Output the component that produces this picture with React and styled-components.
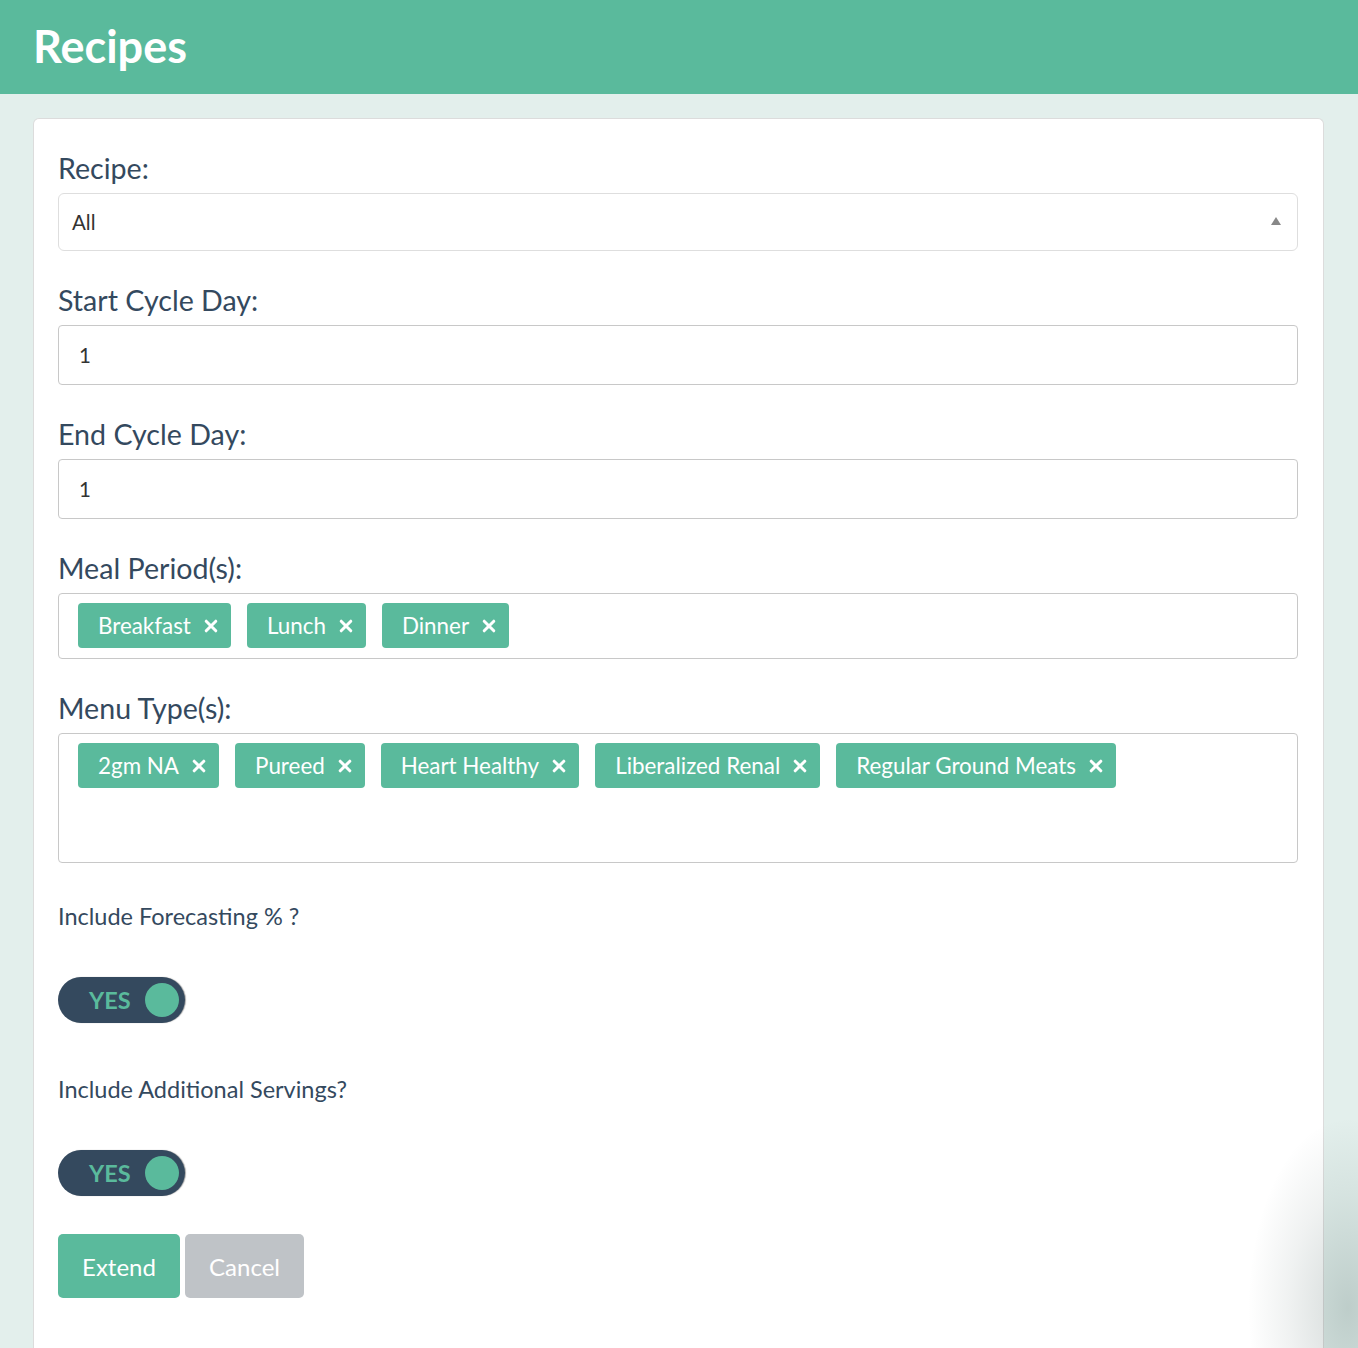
import React from "react";
import styled, { createGlobalStyle } from "styled-components";

const GREEN = "#5aba9c";
const DARK = "#34495e";

const Global = createGlobalStyle`
  html, body { margin: 0; padding: 0; }
  body {
    background: #e3efec;
    font-family: Lato, "Open Sans", "Liberation Sans", sans-serif;
    color: ${DARK};
  }
  * { box-sizing: border-box; }
`;

const Page = styled.div`
  min-height: 1348px;
  display: flex;
  flex-direction: column;
  position: relative;
  overflow: hidden;
`;

const Haze = styled.div`
  position: absolute;
  right: -90px;
  bottom: -150px;
  width: 200px;
  height: 380px;
  border-radius: 50%;
  background: radial-gradient(closest-side, rgba(40, 70, 65, 0.2), rgba(40, 70, 65, 0.07) 60%, rgba(40, 70, 65, 0) 100%);
  pointer-events: none;
`;

const Header = styled.header`
  height: 94px;
  background: ${GREEN};
  display: flex;
  align-items: center;
  padding-left: 33px;
`;

const Title = styled.h1`
  margin: 0;
  font-size: 45px;
  font-weight: 700;
  color: #fff;
  line-height: 1;
  padding-bottom: 2px;
`;

const Card = styled.main`
  margin: 24px 34px 0 33px;
  background: #fff;
  border: 1px solid #dcdcdc;
  border-bottom: none;
  border-radius: 6px 6px 0 0;
  padding: 29px 25px 50px 24px;
  flex: 1;
`;

const Group = styled.div`
  display: flex;
  flex-direction: column;
  margin-bottom: ${(p) => (p.$last ? 0 : 29)}px;
`;

const Label = styled.label`
  font-size: 28.6px;
  line-height: 40px;
  height: 40px;
  color: ${DARK};
  margin-bottom: 5px;
`;

const SelectBox = styled.div`
  height: 58px;
  border: 1px solid #dedede;
  border-radius: 6px;
  display: flex;
  align-items: center;
  justify-content: space-between;
  padding: 0 16px 0 13px;
  font-size: 20.5px;
  color: #333;
`;

const Caret = styled.span`
  width: 0;
  height: 0;
  border-left: 5px solid transparent;
  border-right: 5px solid transparent;
  border-bottom: 8px solid #888;
  margin-top: -3px;
`;

const Input = styled.div`
  height: 60px;
  border: 1px solid #c8c8c8;
  border-radius: 4px;
  display: flex;
  align-items: center;
  padding-left: 20px;
  font-size: 20.5px;
  color: #333;
`;

const TagBox = styled.div`
  min-height: ${(p) => p.$min}px;
  border: 1px solid #c8c8c8;
  border-radius: 4px;
  padding: 9px 19px;
  display: flex;
  flex-wrap: wrap;
  align-content: flex-start;
  gap: 10px 16px;
`;

const Tag = styled.span`
  height: 45px;
  background: ${GREEN};
  color: #fff;
  border-radius: 4px;
  display: inline-flex;
  align-items: center;
  padding: 0 13px 0 20px;
  font-size: 22.4px;
  gap: 13px;
`;

const Remove = styled.svg`
  width: 14px;
  height: 14px;
`;

const Question = styled.p`
  margin: ${(p) => (p.$second ? 51 : 38)}px 0 0;
  font-size: 23.5px;
  line-height: 30px;
  color: ${DARK};
`;

const Toggle = styled.div`
  margin-top: 46px;
  width: 127px;
  height: 46px;
  border-radius: 23px;
  background: ${DARK};
  display: flex;
  align-items: center;
  padding: 0 6px 0 31px;
  justify-content: space-between;
  box-shadow: 1px 0 1px rgba(0, 0, 0, 0.35);
`;

const ToggleText = styled.span`
  color: ${GREEN};
  font-weight: 700;
  font-size: 23.5px;
`;

const Knob = styled.span`
  width: 34px;
  height: 34px;
  border-radius: 50%;
  background: ${GREEN};
`;

const Actions = styled.div`
  margin-top: 38px;
  display: flex;
  gap: 5px;
`;

const Button = styled.button`
  height: 64px;
  width: ${(p) => p.$w}px;
  border: none;
  border-radius: 5px;
  background: ${(p) => (p.$muted ? "#bfc3c7" : GREEN)};
  color: #fff;
  font-family: inherit;
  font-size: 24px;
  cursor: pointer;
`;

const X = () => (
  <Remove viewBox="0 0 14 14">
    <path d="M2.2 2.2 L11.8 11.8 M11.8 2.2 L2.2 11.8" stroke="#fff" strokeWidth="3" strokeLinecap="round" />
  </Remove>
);

const meals = ["Breakfast", "Lunch", "Dinner"];
const menus = ["2gm NA", "Pureed", "Heart Healthy", "Liberalized Renal", "Regular Ground Meats"];

export default function App() {
  return (
    <Page>
      <Global />
      <Header>
        <Title>Recipes</Title>
      </Header>
      <Card>
        <Group>
          <Label>Recipe:</Label>
          <SelectBox>
            <span>All</span>
            <Caret />
          </SelectBox>
        </Group>
        <Group>
          <Label>Start Cycle Day:</Label>
          <Input>1</Input>
        </Group>
        <Group>
          <Label>End Cycle Day:</Label>
          <Input>1</Input>
        </Group>
        <Group>
          <Label>Meal Period(s):</Label>
          <TagBox $min={66}>
            {meals.map((m) => (
              <Tag key={m}>
                {m}
                <X />
              </Tag>
            ))}
          </TagBox>
        </Group>
        <Group $last>
          <Label>Menu Type(s):</Label>
          <TagBox $min={130}>
            {menus.map((m) => (
              <Tag key={m}>
                {m}
                <X />
              </Tag>
            ))}
          </TagBox>
        </Group>
        <Question>Include Forecasting % ?</Question>
        <Toggle>
          <ToggleText>YES</ToggleText>
          <Knob />
        </Toggle>
        <Question $second>Include Additional Servings?</Question>
        <Toggle>
          <ToggleText>YES</ToggleText>
          <Knob />
        </Toggle>
        <Actions>
          <Button $w={122}>Extend</Button>
          <Button $w={119} $muted>Cancel</Button>
        </Actions>
      </Card>
      <Haze />
    </Page>
  );
}
